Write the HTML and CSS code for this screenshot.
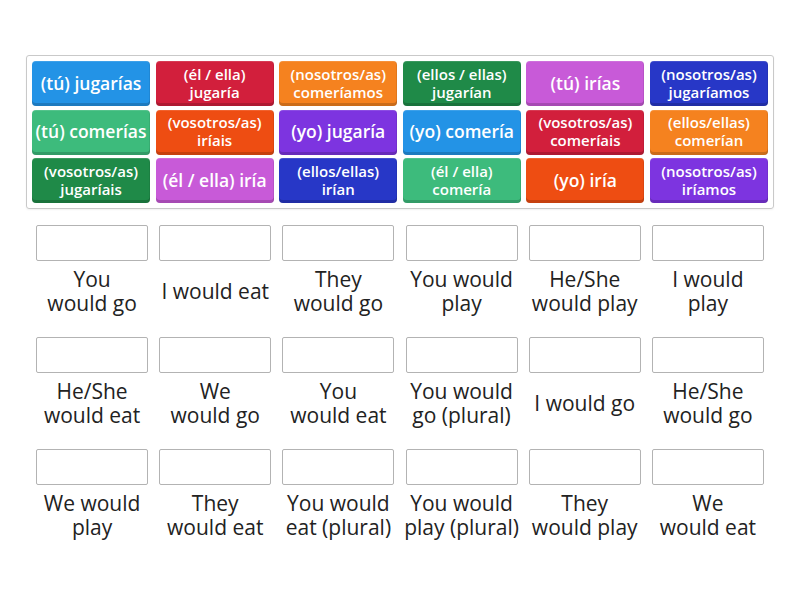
FILE: index.html
```html
<!DOCTYPE html>
<html lang="es">
<head>
<meta charset="utf-8">
<title>Match up</title>
<link rel="stylesheet" href="styles.css">
</head>
<body>
<main class="page">
  <section class="bank">
    <div class="tile c-blue one">(tú) jugarías</div>
    <div class="tile c-red">(él / ella)<br>jugaría</div>
    <div class="tile c-orange">(nosotros/as)<br>comeríamos</div>
    <div class="tile c-dgreen">(ellos / ellas)<br>jugarían</div>
    <div class="tile c-pink one">(tú) irías</div>
    <div class="tile c-dblue">(nosotros/as)<br>jugaríamos</div>

    <div class="tile c-lgreen one">(tú) comerías</div>
    <div class="tile c-rorange">(vosotros/as)<br>iríais</div>
    <div class="tile c-purple one">(yo) jugaría</div>
    <div class="tile c-blue one">(yo) comería</div>
    <div class="tile c-red">(vosotros/as)<br>comeríais</div>
    <div class="tile c-orange">(ellos/ellas)<br>comerían</div>

    <div class="tile c-dgreen">(vosotros/as)<br>jugaríais</div>
    <div class="tile c-pink one">(él / ella) iría</div>
    <div class="tile c-dblue">(ellos/ellas)<br>irían</div>
    <div class="tile c-lgreen">(él / ella)<br>comería</div>
    <div class="tile c-rorange one">(yo) iría</div>
    <div class="tile c-purple">(nosotros/as)<br>iríamos</div>
  </section>

  <section class="slots">
    <div class="slot"><div class="box"></div><div class="label">You<br>would go</div></div>
    <div class="slot"><div class="box"></div><div class="label">I would eat</div></div>
    <div class="slot"><div class="box"></div><div class="label">They<br>would go</div></div>
    <div class="slot"><div class="box"></div><div class="label">You would<br>play</div></div>
    <div class="slot"><div class="box"></div><div class="label">He/She<br>would play</div></div>
    <div class="slot"><div class="box"></div><div class="label">I would<br>play</div></div>

    <div class="slot"><div class="box"></div><div class="label">He/She<br>would eat</div></div>
    <div class="slot"><div class="box"></div><div class="label">We<br>would go</div></div>
    <div class="slot"><div class="box"></div><div class="label">You<br>would eat</div></div>
    <div class="slot"><div class="box"></div><div class="label">You would<br>go (plural)</div></div>
    <div class="slot"><div class="box"></div><div class="label">I would go</div></div>
    <div class="slot"><div class="box"></div><div class="label">He/She<br>would go</div></div>

    <div class="slot"><div class="box"></div><div class="label">We would<br>play</div></div>
    <div class="slot"><div class="box"></div><div class="label">They<br>would eat</div></div>
    <div class="slot"><div class="box"></div><div class="label">You would<br>eat (plural)</div></div>
    <div class="slot"><div class="box"></div><div class="label">You would<br>play (plural)</div></div>
    <div class="slot"><div class="box"></div><div class="label">They<br>would play</div></div>
    <div class="slot"><div class="box"></div><div class="label">We<br>would eat</div></div>
  </section>
</main>
</body>
</html>
```

FILE: styles.css
```css
* { box-sizing: border-box; }

html, body {
  margin: 0;
  padding: 0;
  background: #ffffff;
}

body {
  font-family: "Open Sans", "Liberation Sans", sans-serif;
  color: #222222;
}

.page {
  width: 748px;
  margin-left: 26px;
  padding-top: 55px;
}

.bank {
  display: grid;
  grid-template-columns: repeat(6, 1fr);
  column-gap: 5.5px;
  row-gap: 3.5px;
  padding: 5px;
  border: 1px solid #c9c9c9;
  border-radius: 3px;
  box-shadow: 0 1px 2px rgba(0, 0, 0, 0.06);
}

.tile {
  height: 45px;
  border-radius: 4px;
  display: flex;
  align-items: center;
  justify-content: center;
  text-align: center;
  color: #ffffff;
  font-size: 15px;
  font-weight: 600;
  line-height: 18px;
  white-space: nowrap;
  padding-bottom: 2px;
  box-shadow: inset 0 -3px 0 rgba(0, 0, 0, 0.17), inset 0 1px 0 rgba(255, 255, 255, 0.12), inset -1px 0 0 rgba(0, 0, 0, 0.08);
}

.tile.one {
  font-size: 17.5px;
  line-height: 24px;
}

.c-blue { background: #2393e6; }
.c-red { background: #d21f3c; }
.c-orange { background: #f5821f; }
.c-dgreen { background: #1f8a48; }
.c-pink { background: #c85ad8; }
.c-dblue { background: #2737c7; }
.c-lgreen { background: #3dbb7c; }
.c-rorange { background: #ee4d12; }
.c-purple { background: #7d34e0; }

.slots {
  display: grid;
  grid-template-columns: repeat(6, 1fr);
  row-gap: 20px;
  margin-top: 16px;
  padding: 0 4.5px;
}

.slot {
  display: flex;
  flex-direction: column;
  align-items: center;
}

.box {
  width: 112px;
  height: 36px;
  border: 1px solid #b3b3b3;
  border-radius: 2px;
  background: #ffffff;
}

.label {
  height: 56px;
  width: 123px;
  display: flex;
  align-items: center;
  justify-content: center;
  text-align: center;
  font-size: 21px;
  line-height: 24px;
  white-space: nowrap;
  padding-top: 3px;
}
```
